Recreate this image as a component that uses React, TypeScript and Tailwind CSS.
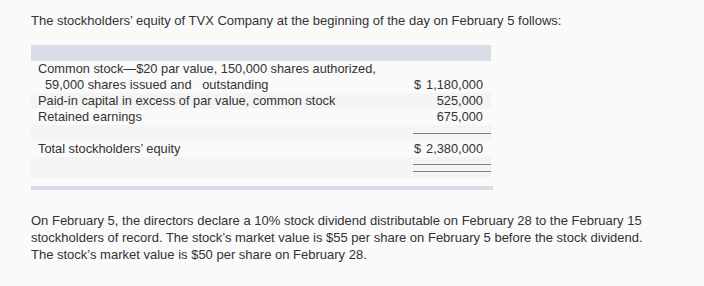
const rows = [
  { label: 'Paid-in capital in excess of par value, common stock', value: '525,000', shade: true },
  { label: 'Retained earnings', value: '675,000', shade: false },
];

export default function App() {
  return (
    <div className="w-[704px] h-[286px] bg-[#fafafa] px-[31px] pt-[13px] text-[#333] font-['Liberation_Sans',Arial,sans-serif]">
      <p className="text-[13px] leading-4">
        The stockholders’ equity of TVX Company at the beginning of the day on February 5 follows:
      </p>

      <div className="mt-4 w-[460px] text-[12.8px] leading-4">
        <div className="h-4 bg-[#d8dce6]" />

        <div className="flex">
          <div className="flex-1 pl-[7px]">
            <div>Common stock—$20 par value, 150,000 shares authorized,</div>
            <div className="pl-[7px]">59,000 shares issued and&nbsp;&nbsp; outstanding</div>
          </div>
          <div className="w-[78px] flex flex-col justify-end">
            <div className="flex justify-between pl-px pr-2">
              <span>$</span>
              <span>1,180,000</span>
            </div>
          </div>
        </div>

        {rows.map((r) => (
          <div key={r.label} className={`flex ${r.shade ? 'bg-[#f4f4f4]' : ''}`}>
            <div className="flex-1 pl-[7px]">{r.label}</div>
            <div className="w-[78px] pr-2 text-right">{r.value}</div>
          </div>
        ))}

        <div className="flex h-4 bg-[#f4f4f4] items-center">
          <div className="flex-1" />
          <div className="w-[78px] h-px bg-[#808080] mt-px" />
        </div>

        <div className="flex">
          <div className="flex-1 pl-[7px]">Total stockholders’ equity</div>
          <div className="w-[78px] flex justify-between pl-px pr-2">
            <span>$</span>
            <span>2,380,000</span>
          </div>
        </div>

        <div className="flex h-[21px] bg-[#f4f4f4]">
          <div className="flex-1" />
          <div className="w-[78px] pt-[7px]">
            <div className="h-px bg-[#808080]" />
            <div className="h-px bg-[#808080] mt-[6px]" />
          </div>
        </div>
      </div>

      <div className="mt-2 w-[462px] h-1 bg-[#d8dce6]" />

      <p className="mt-[22px] text-[13px] leading-[17px] w-[620px]">
        On February 5, the directors declare a 10% stock dividend distributable on February 28 to the February 15
        stockholders of record. The stock’s market value is $55 per share on February 5 before the stock dividend.
        The stock’s market value is $50 per share on February 28.
      </p>
    </div>
  );
}
